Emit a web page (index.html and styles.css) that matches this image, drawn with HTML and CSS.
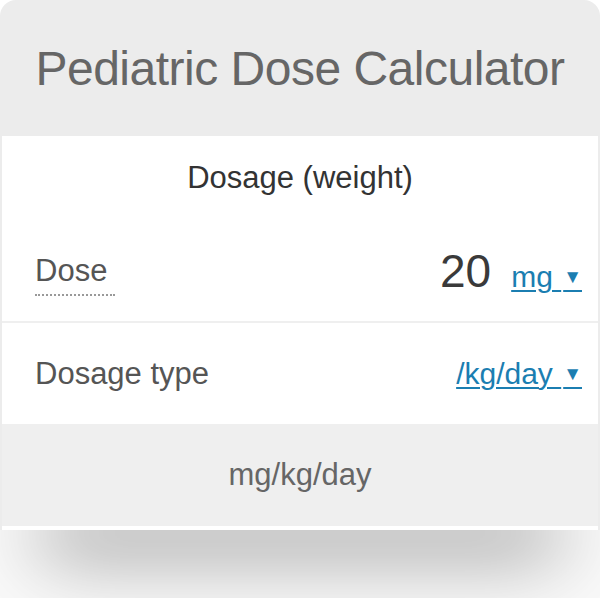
FILE: index.html
```html
<!DOCTYPE html>
<html lang="en">
<head>
    <meta charset="UTF-8">
    <meta name="viewport" content="width=device-width, initial-scale=1.0">
    <title>Pediatric Dose Calculator</title>
    <link rel="stylesheet" href="styles.css">
</head>
<body>
    <div class="card">
        <div class="header">
            <h1>Pediatric Dose Calculator</h1>
        </div>
        <div class="content">
            <div class="section-title">Dosage (weight)</div>

            <div class="row">
                <span class="label dotted">Dose</span>
                <div class="value">
                    <span class="num">20</span>
                    <a class="unit" href="#">mg <span class="arrow">&#9660;</span></a>
                </div>
            </div>

            <div class="row">
                <span class="label">Dosage type</span>
                <div class="value">
                    <a class="unit" href="#">/kg/day <span class="arrow">&#9660;</span></a>
                </div>
            </div>

            <div class="result">mg/kg/day</div>
        </div>
    </div>
    <div class="shadow"></div>
</body>
</html>
```

FILE: styles.css
```css
body {
    margin: 0;
    width: 600px;
    height: 600px;
    overflow: hidden;
    background: #fff;
    font-family: "Liberation Sans", Arial, Helvetica, sans-serif;
}
.card {
    background: #ececec;
    border-radius: 16px 16px 0 0;
    padding: 0 2px 0 2px;
}
.header {
    height: 136px;
    display: flex;
    align-items: center;
    justify-content: center;
}
h1 {
    margin: 0;
    font-weight: normal;
    font-size: 48px;
    letter-spacing: -0.5px;
    color: #666;
}
.content {
    background: #fff;
    padding-bottom: 4px;
}
.section-title {
    height: 84px;
    display: flex;
    align-items: center;
    justify-content: center;
    font-size: 31px;
    color: #333;
}
.row {
    height: 101px;
    display: flex;
    align-items: center;
    justify-content: space-between;
    padding: 0 16px 0 33px;
    border-bottom: 2px solid #efefef;
}
.row + .row {
    border-bottom: none;
}
.label {
    font-size: 31px;
    color: #555;
}
.dotted {
    border-bottom: 2px dotted #999;
    padding-right: 8px;
    padding-bottom: 5px;
    margin-top: 7px;
}
.value {
    display: flex;
    align-items: baseline;
}
.num {
    font-size: 46px;
    color: #3a3a3a;
    margin-right: 20px;
}
.unit {
    font-size: 30px;
    color: #1b7eb1;
    text-decoration: underline;
    text-underline-offset: 3px;
    text-decoration-thickness: 2px;
}
.arrow {
    font-size: 19px;
    vertical-align: 4px;
    margin-left: 2px;
}
.result {
    height: 102px;
    background: #efefef;
    display: flex;
    align-items: center;
    justify-content: center;
    font-size: 31px;
    color: #666;
}
.shadow {
    height: 68px;
    overflow: hidden;
    background: #fafafa;
}
.shadow::before {
    content: "";
    display: block;
    height: 30px;
    margin: -30px 40px 0;
    background: #999;
    box-shadow: 0 18px 80px rgba(0, 0, 0, 0.62);
}
```
